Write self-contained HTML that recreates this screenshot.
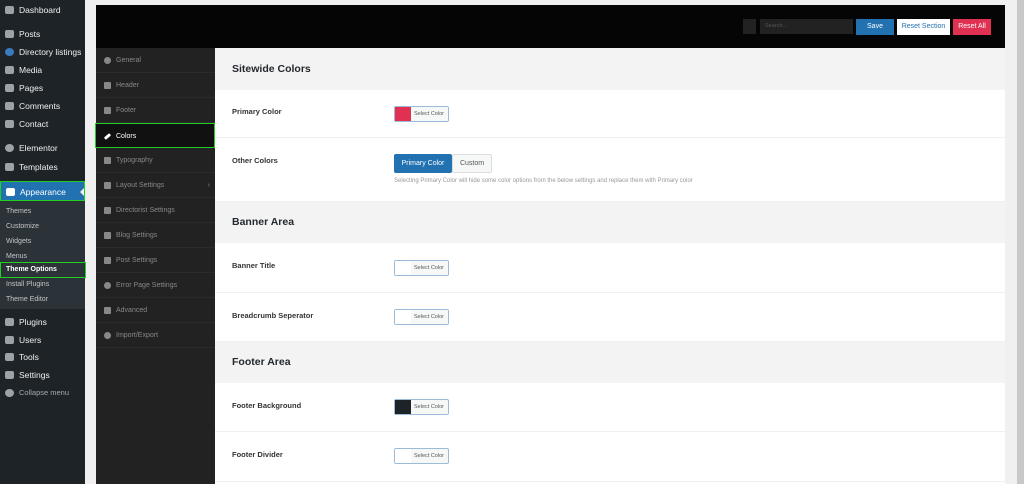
<!DOCTYPE html><html><head><style>
*{margin:0;padding:0;box-sizing:border-box}
body{width:1024px;height:484px;overflow:hidden;background:#f0f0f1;font-family:"Liberation Sans",sans-serif;position:relative}
.wp{position:absolute;left:0;top:0;width:85px;height:484px;background:#1d2327}
.wi{position:absolute;left:0;width:85px;height:18px;color:#f0f0f1;font-size:8.5px;line-height:18px;padding-left:19px}
.wi i{position:absolute;left:5px;top:5px;width:9px;height:8px;background:#9ca2a7;border-radius:2px}
.sub{position:absolute;left:0;top:201px;width:85px;height:108px;background:#2c3338}
.si{position:absolute;left:6px;font-size:7px;color:#c3c4c7}
.hdr{position:absolute;left:96px;top:5px;width:909px;height:43px;background:#050505}
.nav{position:absolute;left:96px;top:48px;width:119px;height:436px;background:#222}
.ni{position:absolute;left:0;width:119px;height:25px;border-bottom:1px solid #2b2b2b;color:#888;font-size:7px;line-height:25px;padding-left:20px}
.ni i{position:absolute;left:8px;top:9px;width:7px;height:7px;background:#888;border-radius:1px}
.content{position:absolute;left:215px;top:48px;width:790px;height:436px;background:#fff}
.sec{position:absolute;left:0;width:790px;background:#f3f3f3;font-size:10.5px;font-weight:bold;color:#23282d;padding-left:17px}
.row{position:absolute;left:0;width:790px;border-bottom:1px solid #f0f0f0}
.lab{position:absolute;left:17px;font-size:7.5px;font-weight:bold;color:#333}
.cp{position:absolute;left:179px;width:55px;height:16px;border:1px solid #9cbbd8;border-radius:2px;background:#f6f7f7;font-size:5.5px;color:#555;line-height:14px}
.cp b{position:absolute;left:0;top:0;width:16px;height:14px}
.cp span{position:absolute;left:19px}
.btn{position:absolute;top:19px;height:16px;font-size:7px;line-height:16px;text-align:center;border-radius:2px}
</style></head><body>
<div class="wp">
<div class="wi" style="top:1px"><i></i>Dashboard</div>
<div class="wi" style="top:25px"><i></i>Posts</div>
<div class="wi" style="top:43px"><i style="border-radius:50%;background:#3a7bbf"></i>Directory listings</div>
<div class="wi" style="top:61px"><i></i>Media</div>
<div class="wi" style="top:79px"><i></i>Pages</div>
<div class="wi" style="top:97px"><i></i>Comments</div>
<div class="wi" style="top:115px"><i></i>Contact</div>
<div class="wi" style="top:139px"><i style="border-radius:50%"></i>Elementor</div>
<div class="wi" style="top:158px"><i></i>Templates</div>
<div class="wi" style="top:181px;height:20px;line-height:20px;background:#2271b1;border:1px solid #22d022;color:#fff"><i style="background:#fff;top:6px"></i>Appearance<span style="position:absolute;right:0;top:6px;border:4px solid transparent;border-right-color:#f0f0f1"></span></div>
<div class="sub">
<div class="si" style="top:7px">Themes</div>
<div class="si" style="top:22px">Customize</div>
<div class="si" style="top:37px">Widgets</div>
<div class="si" style="top:52px">Menus</div>
<div style="position:absolute;left:0;top:61px;width:86px;height:16px;border:1px solid #22d022"></div>
<div class="si" style="top:65px;color:#fff;font-weight:bold">Theme Options</div>
<div class="si" style="top:80px">Install Plugins</div>
<div class="si" style="top:95px">Theme Editor</div>
</div>
<div class="wi" style="top:313px"><i></i>Plugins</div>
<div class="wi" style="top:331px"><i></i>Users</div>
<div class="wi" style="top:348px"><i></i>Tools</div>
<div class="wi" style="top:366px"><i></i>Settings</div>
<div class="wi" style="top:384px;color:#a7aaad;font-size:7.5px"><i style="border-radius:50%"></i>Collapse menu</div>
</div>
<div style="position:absolute;left:1017px;top:0;width:7px;height:484px;background:#c8c8c8"></div>
<div class="hdr">
<div style="position:absolute;left:647px;top:14px;width:13px;height:15px;background:#222"></div>
<div style="position:absolute;left:664px;top:14px;width:93px;height:15px;background:#222;color:#555;font-size:5.5px;line-height:15px;padding-left:5px">Search...</div>
<div style="position:absolute;left:760px;top:14px;width:38px;height:16px;background:#2271b1;color:#fff;font-size:7px;line-height:16px;text-align:center">Save</div>
<div style="position:absolute;left:801px;top:14px;width:53px;height:16px;background:#fff;color:#2271b1;font-size:7px;line-height:16px;text-align:center">Reset Section</div>
<div style="position:absolute;left:857px;top:14px;width:38px;height:16px;background:#e03152;color:#fff;font-size:7px;line-height:16px;text-align:center">Reset All</div>
</div>
<div class="nav">
<div class="ni" style="top:0"><i style="border-radius:50%"></i>General</div>
<div class="ni" style="top:25px"><i></i>Header</div>
<div class="ni" style="top:50px"><i></i>Footer</div>
<div class="ni" style="top:75px;background:#111;border:1px solid #22d022;color:#fff;left:-1px;width:120px"><i style="background:#fff;transform:rotate(-40deg);height:3px;top:11px"></i>Colors</div>
<div class="ni" style="top:100px"><i></i>Typography</div>
<div class="ni" style="top:125px"><i></i>Layout Settings<span style="position:absolute;right:5px">›</span></div>
<div class="ni" style="top:150px"><i></i>Directorist Settings</div>
<div class="ni" style="top:175px"><i></i>Blog Settings</div>
<div class="ni" style="top:200px"><i></i>Post Settings</div>
<div class="ni" style="top:225px"><i style="border-radius:50%"></i>Error Page Settings</div>
<div class="ni" style="top:250px"><i></i>Advanced</div>
<div class="ni" style="top:275px"><i style="border-radius:50%"></i>Import/Export</div>
</div>
<div class="content">
<div class="sec" style="top:0;height:42px;line-height:42px">Sitewide Colors</div>
<div class="row" style="top:42px;height:48px"><div class="lab" style="top:17px">Primary Color</div><div class="cp" style="top:16px"><b style="background:#e03152"></b><span>Select Color</span></div></div>
<div class="row" style="top:90px;height:64px"><div class="lab" style="top:18px">Other Colors</div>
<div class="btn" style="left:179px;width:58px;background:#2271b1;color:#fff;top:16px;height:19px;line-height:19px">Primary Color</div>
<div class="btn" style="left:237px;width:40px;background:#f6f7f7;border:1px solid #ddd;color:#555;top:16px;height:19px;line-height:17px">Custom</div>
<div style="position:absolute;left:179px;top:40px;font-size:6px;color:#999">Selecting Primary Color will hide some color options from the below settings and replace them with Primary color</div></div>
<div class="sec" style="top:154px;height:41px;line-height:41px">Banner Area</div>
<div class="row" style="top:195px;height:50px"><div class="lab" style="top:18px">Banner Title</div><div class="cp" style="top:17px"><b style="background:#fff"></b><span>Select Color</span></div></div>
<div class="row" style="top:245px;height:49px"><div class="lab" style="top:18px">Breadcrumb Seperator</div><div class="cp" style="top:16px"><b style="background:#fff"></b><span>Select Color</span></div></div>
<div class="sec" style="top:294px;height:41px;line-height:41px">Footer Area</div>
<div class="row" style="top:335px;height:49px"><div class="lab" style="top:18px">Footer Background</div><div class="cp" style="top:16px"><b style="background:#1d2327"></b><span>Select Color</span></div></div>
<div class="row" style="top:384px;height:50px"><div class="lab" style="top:18px">Footer Divider</div><div class="cp" style="top:16px"><b style="background:#fff"></b><span>Select Color</span></div></div>
</div>
</body></html>
